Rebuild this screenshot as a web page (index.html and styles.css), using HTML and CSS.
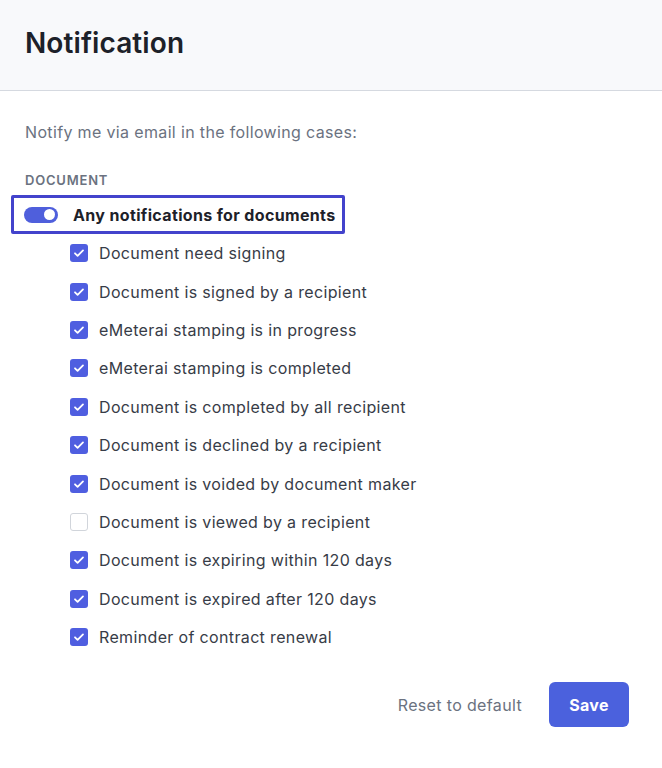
FILE: index.html
```html
<!DOCTYPE html>
<html>
<head>
  <title>Notification</title>
  <link rel="stylesheet" href="styles.css">
</head>
<body>
<div class="panel">
  <div class="panel-head">
    <h1 class="title">Notification</h1>
  </div>
  <div class="panel-body">
    <p class="intro">Notify me via email in the following cases:</p>
    <div class="group-label">DOCUMENT</div>
    <label class="master focused">
      <span class="toggle on"><span class="knob"></span></span>
      <span class="master-text">Any notifications for documents</span>
    </label>
    <ul class="options">
      <li><span class="check on"></span>Document need signing</li>
      <li><span class="check on"></span>Document is signed by a recipient</li>
      <li><span class="check on"></span>eMeterai stamping is in progress</li>
      <li><span class="check on"></span>eMeterai stamping is completed</li>
      <li><span class="check on"></span>Document is completed by all recipient</li>
      <li><span class="check on"></span>Document is declined by a recipient</li>
      <li><span class="check on"></span>Document is voided by document maker</li>
      <li><span class="check"></span>Document is viewed by a recipient</li>
      <li><span class="check on"></span>Document is expiring within 120 days</li>
      <li><span class="check on"></span>Document is expired after 120 days</li>
      <li><span class="check on"></span>Reminder of contract renewal</li>
    </ul>
    <div class="actions">
      <button class="btn-link">Reset to default</button>
      <button class="btn-primary">Save</button>
    </div>
  </div>
</div>
</body>
</html>
```

FILE: styles.css
```css
html, body {
  margin: 0;
  background: #fff;
}
body {
  font-family: Inter, "Noto Sans", sans-serif;
  color: #2b2f38;
  letter-spacing: 0.35px;
}
.panel-head {
  height: 90px;
  background: #f8f9fb;
  border-bottom: 1px solid #d5d9e0;
  display: flex;
  align-items: center;
  padding: 0 25px;
}
.title {
  margin: 0;
  font-family: Inter, sans-serif;
  font-size: 28px;
  font-weight: 600;
  letter-spacing: 0.1px;
  color: #1d2129;
  padding-bottom: 4px;
}
.panel-body {
  padding: 29px 25px 0 25px;
}
.intro {
  margin: 0;
  font-size: 16px;
  line-height: 24px;
  color: #6b7280;
}
.group-label {
  margin-top: 28px;
  font-size: 13px;
  font-weight: 600;
  color: #6b7280;
  letter-spacing: 0.8px;
  line-height: 16px;
}
.master {
  display: flex;
  align-items: center;
  gap: 15px;
  margin: 7px 0 0 -14px;
  width: 318px;
  height: 33px;
  padding-left: 10px;
  box-sizing: content-box;
  border: 3px solid #4343cc;
  border-radius: 2px;
}
.toggle {
  width: 34px;
  height: 16px;
  border-radius: 8px;
  background: #4f5fdc;
  display: flex;
  align-items: center;
  justify-content: flex-end;
  padding: 0 3px;
  box-sizing: border-box;
}
.knob {
  width: 11px;
  height: 11px;
  border-radius: 50%;
  background: #fff;
}
.master-text {
  font-size: 16px;
  font-weight: 700;
  color: #1d2129;
}
.options {
  list-style: none;
  margin: 0;
  padding: 0 0 0 45px;
}
.options li {
  display: flex;
  align-items: center;
  gap: 11px;
  height: 38.4px;
  font-size: 16px;
  color: #373c47;
}
.check {
  width: 18px;
  height: 18px;
  border-radius: 3px;
  border: 1px solid #d1d5db;
  box-sizing: border-box;
  background: #fff;
  flex: none;
}
.check.on {
  border: none;
  background: #4f5ee0 url("data:image/svg+xml,%3Csvg xmlns='http://www.w3.org/2000/svg' viewBox='0 0 18 18'%3E%3Cpath d='M5 9.3l2.6 2.6L13 6.4' fill='none' stroke='white' stroke-width='1.8' stroke-linecap='round' stroke-linejoin='round'/%3E%3C/svg%3E") no-repeat center / 18px 18px;
}
.actions {
  display: flex;
  justify-content: flex-end;
  align-items: center;
  gap: 27px;
  margin-top: 26px;
  padding-right: 8px;
}
.btn-link {
  border: none;
  background: none;
  font-family: Inter, sans-serif;
  font-size: 16px;
  letter-spacing: 0.35px;
  color: #6b7280;
  padding: 0;
}
.btn-primary {
  border: none;
  width: 80px;
  height: 45px;
  border-radius: 6px;
  background: #4b61dd;
  color: #fff;
  font-family: Inter, sans-serif;
  font-size: 16px;
  font-weight: 700;
  letter-spacing: 0.3px;
}
```
